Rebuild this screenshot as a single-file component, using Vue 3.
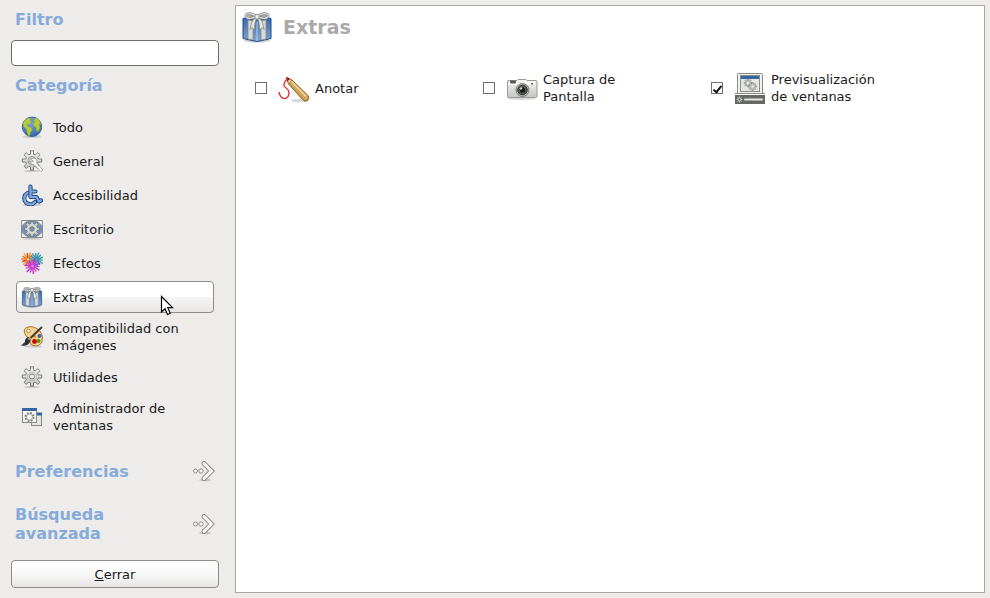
<script setup>
import { ref } from 'vue'

const filter = ref('')
const current = ref('extras')

const categories = [
  { id: 'todo', label: 'Todo', icon: 'globe' },
  { id: 'general', label: 'General', icon: 'general' },
  { id: 'accesibilidad', label: 'Accesibilidad', icon: 'access' },
  { id: 'escritorio', label: 'Escritorio', icon: 'desktop' },
  { id: 'efectos', label: 'Efectos', icon: 'effects' },
  { id: 'extras', label: 'Extras', icon: 'gift' },
  { id: 'imagenes', label: 'Compatibilidad con imágenes', icon: 'palette' },
  { id: 'utilidades', label: 'Utilidades', icon: 'gear' },
  { id: 'ventanas', label: 'Administrador de ventanas', icon: 'windows' }
]

const links = ['Preferencias', 'Búsqueda avanzada']

const plugins = ref([
  { id: 'annotate', label: 'Anotar', icon: 'pencil', enabled: false },
  { id: 'screenshot', label: 'Captura de Pantalla', icon: 'camera', enabled: false },
  { id: 'thumbnail', label: 'Previsualización de ventanas', icon: 'preview', enabled: true }
])

function point(cx, cy, r, a) {
  return `${(cx + r * Math.cos(a)).toFixed(2)} ${(cy + r * Math.sin(a)).toFixed(2)}`
}

function gearPath(cx, cy, inner, outer, teeth) {
  const step = (Math.PI * 2) / teeth
  const pts = []
  for (let i = 0; i < teeth; i++) {
    const a = i * step - Math.PI / 2
    pts.push(point(cx, cy, inner, a - step * 0.3))
    pts.push(point(cx, cy, outer, a - step * 0.2))
    pts.push(point(cx, cy, outer, a + step * 0.2))
    pts.push(point(cx, cy, inner, a + step * 0.3))
  }
  return `M${pts.join('L')}Z`
}

function burst(cx, cy, r, colors) {
  return Array.from({ length: 14 }, (_, i) => ({
    d: `M${cx} ${cy}L${point(cx, cy, i % 2 ? r : r * 0.85, (i * Math.PI) / 7 + 0.1)}`,
    color: colors[i % colors.length]
  }))
}

const rays = [
  ...burst(8, 8.5, 6.8, ['#e8641b', '#f5a623', '#e23b2e', '#f0862a']),
  ...burst(16.5, 8.5, 6.8, ['#2a8fbd', '#35a887', '#3f6fc4', '#2fa3c9']),
  ...burst(12.5, 15, 7.6, ['#d63bd0', '#a13be0', '#f04fb0', '#c929c0'])
]
</script>

<template>
  <div class="window">
    <svg class="sprites" aria-hidden="true">
      <defs>
        <linearGradient id="metal" x1="0" y1="0" x2="0" y2="1">
          <stop offset="0" stop-color="#f6f6f4" />
          <stop offset="1" stop-color="#c3c5c1" />
        </linearGradient>
        <linearGradient id="blue" x1="0" y1="0" x2="0" y2="1">
          <stop offset="0" stop-color="#3465a4" />
          <stop offset="1" stop-color="#7fa6d8" />
        </linearGradient>
        <radialGradient id="sea" cx=".4" cy=".3" r=".8">
          <stop offset="0" stop-color="#7ea7de" />
          <stop offset="1" stop-color="#2d5d9f" />
        </radialGradient>
        <linearGradient id="wood" x1="0" y1="1" x2="1" y2="0">
          <stop offset="0" stop-color="#b07a2c" />
          <stop offset="1" stop-color="#f0cf8c" />
        </linearGradient>
      </defs>

      <symbol id="globe" viewBox="1 1 22 22">
        <ellipse cx="12" cy="21.5" rx="9" ry="1.5" fill="#000" opacity=".15" />
        <circle cx="12" cy="11.8" r="9.7" fill="url(#sea)" stroke="#3a62a0" />
        <path d="M4 6l4-3 3 .5-1 2.500 1.500 1-2.500 2-2 .5 1 2 3 1 1.500 2.500-2 2-.5 3-1.500 1-1.500-4-.5-3-3-2.500-.5-3zM14 4.500l2.500-1.500 3 2.500 1.500 4-1.500-.5.5 4-2 4-1.500-1-.5-3.500-2-1-1-3 2-1.500-1.500-1z" fill="#b5cc3a" stroke="#83a036" stroke-width=".5" />
      </symbol>

      <symbol id="gear" viewBox="1 1 22 22">
        <ellipse cx="12" cy="22" rx="8" ry="1" fill="#000" opacity=".15" />
        <path :d="gearPath(12, 11.5, 6.5, 9.8, 8)" fill="url(#metal)" stroke="#777974" stroke-linejoin="round" />
        <circle cx="12" cy="11.5" r="4.500" fill="none" stroke="#b5b7b3" />
        <circle cx="12" cy="11.5" r="2.500" fill="#eeeeec" stroke="#777974" />
      </symbol>

      <symbol id="general" viewBox="1 1 22 22">
        <ellipse cx="12" cy="22" rx="8" ry="1" fill="#000" opacity=".15" />
        <path :d="gearPath(12, 11.5, 6.5, 9.8, 8)" fill="url(#metal)" stroke="#777974" stroke-linejoin="round" />
        <circle cx="12" cy="11.5" r="4" fill="#d8d9d6" stroke="#8f918c" />
        <path d="M10.500 10q4-2.500 6.500 1l-.5 3 6.500 7-2 1.500-7-7-3-.5-1.500-3 2.500 1 1.500-1z" fill="#fcfcfc" stroke="#888a85" stroke-width=".7" stroke-linejoin="round" />
      </symbol>

      <symbol id="access" viewBox="1 1 22 22">
        <ellipse cx="12" cy="22" rx="9" ry="1" fill="#000" opacity=".15" />
        <g fill="none" stroke-linecap="round" stroke-linejoin="round">
          <path d="M10.500 3.500v10.500h6l2.500 4.500 2-1M11 8.500h4.500M7.500 10a6 6 0 1 0 7.500 9" stroke="#204a87" stroke-width="4.200" />
          <path d="M10.500 3.500v10.500h6l2.500 4.500 2-1M11 8.500h4.500M7.500 10a6 6 0 1 0 7.500 9" stroke="#82aadc" stroke-width="2.200" />
        </g>
      </symbol>

      <symbol id="desktop" viewBox="1 1 22 22">
        <ellipse cx="12" cy="21.5" rx="10" ry="1.500" fill="#000" opacity=".12" />
        <rect x="1.500" y="3.500" width="21" height="17" rx="1" fill="#7094c4" stroke="#888a85" />
        <path d="M1.500 9V3.500H8zM16 3.500h6.500V9zM1.500 15v5.500H8zM22.500 15v5.500H16z" fill="#eeeeec" stroke="#888a85" stroke-width=".8" />
        <path :d="gearPath(12, 12, 5.6, 7.8, 8)" fill="#d3d5d1" stroke="#777974" />
        <circle cx="12" cy="12" r="2.200" fill="#7094c4" stroke="#777974" />
      </symbol>

      <symbol id="effects" viewBox="1 1 22 22">
        <path v-for="(ray, i) in rays" :key="i" :d="ray.d" :stroke="ray.color" stroke-width="1.400" stroke-linecap="round" />
        <circle cx="8" cy="8.5" r="1.300" fill="#f9d34c" />
        <circle cx="16.5" cy="8.5" r="1.300" fill="#5b8bd0" />
        <circle cx="12.5" cy="15" r="1.300" fill="#ef8bea" />
      </symbol>

      <symbol id="gift" viewBox="1 0 30 32">
        <ellipse cx="16" cy="29.500" rx="13" ry="2" fill="#000" opacity=".2" />
        <path d="M2 7.500L16 5l14 2.500V27.500L16 30.500 2 27.500z" fill="url(#blue)" stroke="#204a87" stroke-linejoin="round" />
        <path d="M2.500 8L16 10.500 29.500 8 16 5z" fill="#3a69ac" />
        <path d="M16 10.500v19.500" stroke="#b4cdec" />
        <path d="M7 9l5 1v19l-5-1zM20 10l5-1v19l-5 1z" fill="#d8dad5" stroke="#8a8c86" stroke-width=".8" />
        <path d="M14.500 6.500q-4.500 3-5.500 12l2-2 2.500 2.500q0-8 2-11.500zM17.500 6.500q4.500 3 5.500 12l-2-2-2.500 2.500q0-8-2-11.500z" fill="#e4e5e1" stroke="#868882" stroke-width=".8" stroke-linejoin="round" />
        <path d="M15.500 5.500Q10 1.500 6.500 3t0 4q4 1 9-1.500zM16.500 5.500Q22 1.500 25.500 3t0 4q-4 1-9-1.500z" fill="#aeb3b1" stroke="#7d7f7a" stroke-width="2.600" />
        <path d="M15.500 5.500Q10 1.500 6.500 3t0 4q4 1 9-1.500zM16.500 5.500Q22 1.500 25.500 3t0 4q-4 1-9-1.500z" fill="none" stroke="#e4e5e2" stroke-width="1.300" />
        <rect x="14" y="3.500" width="4" height="4.500" rx="1" fill="#eeeeec" stroke="#7d7f7a" stroke-width=".8" />
      </symbol>

      <symbol id="palette" viewBox="1 1 22 22">
        <ellipse cx="13" cy="21.500" rx="9" ry="1" fill="#000" opacity=".15" />
        <path d="M5.500 10Q2 3.500 8 2t12 4q4 5 2 10.500T13 20.500q-4-1-3-4t-1.500-4-3-2.500z" fill="#f3d292" stroke="#b0762a" />
        <circle cx="8.500" cy="6" r="1.800" fill="#edebe8" stroke="#b0762a" stroke-width=".7" />
        <circle cx="19.500" cy="11" r="2" fill="#3465a4" />
        <circle cx="18.500" cy="16" r="2" fill="#4e9a06" />
        <circle cx="14.500" cy="16.500" r="2.400" fill="#cc0000" />
        <circle cx="14.500" cy="11.500" r="1.300" fill="#f57900" />
        <path d="M21.500 2.500L10.500 13" stroke="#3b3d38" stroke-width="2" stroke-linecap="round" />
        <path d="M10.500 13l-2.500-1q-3.500 2-3 5L1 20.500q6 1 8-2t1.500-5.500z" fill="#2e3436" />
        <path d="M10.500 12.500l-2 2" stroke="#c4a66c" stroke-width="2" />
      </symbol>

      <symbol id="windows" viewBox="1 1 22 22">
        <rect x="11.500" y="8.500" width="10" height="12" fill="#e4e5e3" stroke="#888a85" />
        <path d="M11 7.500h11v3H11z" fill="#3465a4" />
        <rect x="2.500" y="4.500" width="14" height="13" fill="#f6f6f5" stroke="#888a85" />
        <path d="M2 3h15v3H2z" fill="#3465a4" />
        <circle cx="9.500" cy="12" r="4" fill="#eee" stroke="#777974" stroke-width="2" stroke-dasharray="1.700 1.440" />
        <circle cx="9.500" cy="12" r="3" fill="#f6f6f5" stroke="#999b96" stroke-width=".7" />
      </symbol>

      <symbol id="arrows" viewBox="1 1 22 22">
        <ellipse cx="13" cy="21" rx="6" ry="1.200" fill="#000" opacity=".2" />
        <circle cx="3.500" cy="12" r="2" fill="#f4f4f3" stroke="#8d8f8a" />
        <circle cx="9" cy="12" r="2.200" fill="#f4f4f3" stroke="#8d8f8a" />
        <path d="M12 4.500l7.500 7.500-7.500 7.500" fill="none" stroke="#777974" stroke-width="4.800" stroke-linecap="round" />
        <path d="M12 4.500l7.500 7.500-7.500 7.500" fill="none" stroke="#f4f4f3" stroke-width="3.200" stroke-linecap="round" />
      </symbol>

      <symbol id="pencil" viewBox="0 0 32 32">
        <ellipse cx="22" cy="28.500" rx="9" ry="1.800" fill="#000" opacity=".15" />
        <path d="M9 6l5 2 16 15.500q2 3-.5 5t-5-1L10.500 12z" fill="url(#wood)" stroke="#8a6326" stroke-linejoin="round" />
        <path d="M13.500 9.500l14.500 15" stroke="#f6dda4" stroke-width="1.300" />
        <path d="M9 6l5 2-3.500 4z" fill="#f3d9ab" stroke="#8a6326" stroke-width=".7" />
        <path d="M8 5l4 1.500-2.500 3z" fill="#a40000" />
        <path d="M9 7Q4 13 7 15t4 5q0 6-4 6.500T1 20.500" fill="none" stroke="#e2343c" stroke-width="1.400" stroke-linecap="round" />
      </symbol>

      <symbol id="camera" viewBox="0 -2 32 32">
        <ellipse cx="16" cy="24.500" rx="14" ry="1.500" fill="#000" opacity=".15" />
        <path d="M2 6.500h9l1-1h8l1 1h9q1 0 1 1V22q0 1.500-1.500 1.500h-27Q1.500 23.500 1.500 22V7.500q0-1 .5-1z" fill="url(#metal)" stroke="#999b97" />
        <path d="M3 8h26v3H3z" fill="#fff" />
        <rect x="4" y="6.500" width="6" height="3" rx="1" fill="#555753" />
        <rect x="25" y="9" width="2" height="1.500" fill="#555753" />
        <circle cx="16.500" cy="16" r="6.500" fill="#babdb6" stroke="#777974" />
        <circle cx="16.500" cy="16" r="4.800" fill="#555753" stroke="#2e3436" />
        <circle cx="16.500" cy="16" r="2.600" fill="#161818" />
        <circle cx="15" cy="14.500" r="1.200" fill="#c9d2dc" />
      </symbol>

      <symbol id="preview" viewBox="0 0 32 32">
        <path d="M4.500 1.500h23q1 0 1 1v19h-25v-19q0-1 1-1z" fill="#f1f1f0" stroke="#888a85" />
        <rect x="6.500" y="3.500" width="19" height="16" fill="#e6e7e5" stroke="#888a85" />
        <path d="M7 4h18v3H7z" fill="#3465a4" />
        <path :d="gearPath(14, 11, 2.6, 4, 8)" fill="#c6c8c4" stroke="#888a85" stroke-width=".7" />
        <path :d="gearPath(18.5, 14.5, 2.6, 4, 8)" fill="#c6c8c4" stroke="#888a85" stroke-width=".7" />
        <circle cx="14" cy="11" r="1" fill="#f1f1f0" />
        <circle cx="18.5" cy="14.5" r="1" fill="#f1f1f0" />
        <path d="M1 21.500h30" stroke="#888a85" />
        <rect x="1" y="23" width="30" height="9" fill="#666864" />
        <path :d="gearPath(5.5, 27.5, 1.8, 3, 8)" fill="#c6c8c4" />
        <circle cx="5.500" cy="27.5" r="1" fill="#5d5f5b" />
        <path d="M11 27.500h17" stroke="#e4e5e3" stroke-width="2" stroke-linecap="round" />
      </symbol>
    </svg>

    <aside class="sidebar">
      <label class="heading" for="filter">Filtro</label>
      <input id="filter" v-model="filter" class="filter" type="text" />

      <h2 class="heading">Categoría</h2>
      <nav class="categories">
        <button
          v-for="cat in categories"
          :key="cat.id"
          type="button"
          class="category"
          :class="{ active: cat.id === current }"
          @click="current = cat.id"
        >
          <svg class="icon-small"><use :href="`#${cat.icon}`" /></svg>
          <span>{{ cat.label }}</span>
          <svg v-if="cat.id === 'extras'" class="pointer" viewBox="0 0 14 21" aria-hidden="true">
            <path d="M1.500 1.500v15.500l3.500-3.200 2.500 5.700 2.700-1.200L7.700 12.700h4.800z" fill="#fff" stroke="#000" stroke-width="1.200" />
          </svg>
        </button>
      </nav>

      <div class="links">
        <button v-for="link in links" :key="link" type="button" class="link">
          <span class="link-text">{{ link }}</span>
          <svg class="icon-small"><use href="#arrows" /></svg>
        </button>
      </div>

      <button type="button" class="close"><u>C</u>errar</button>
    </aside>

    <main class="panel">
      <header class="panel-header">
        <svg class="icon-large"><use href="#gift" /></svg>
        <h1 class="title">Extras</h1>
      </header>
      <div class="plugins">
        <div v-for="plugin in plugins" :key="plugin.id" class="plugin">
          <input :id="plugin.id" v-model="plugin.enabled" type="checkbox" class="check" />
          <label class="plugin-label" :for="plugin.id">
            <svg class="icon-large"><use :href="`#${plugin.icon}`" /></svg>
            <span class="plugin-name">{{ plugin.label }}</span>
          </label>
        </div>
      </div>
    </main>
  </div>
</template>

<style>
body {
  margin: 0;
  background: #edeceb;
}
</style>

<style scoped>
.window {
  display: flex;
  box-sizing: border-box;
  min-height: 100vh;
  padding: 5px 5px 5px 11px;
  font-family: 'DejaVu Sans', sans-serif;
  font-size: 13px;
  line-height: 17px;
  color: #1a1a1a;
}

.sprites {
  position: absolute;
  width: 0;
  height: 0;
}

button,
input {
  box-sizing: border-box;
  margin: 0;
  font: inherit;
  color: inherit;
}

.sidebar {
  display: flex;
  flex: 0 0 208px;
  flex-direction: column;
  margin-right: 16px;
}

.heading {
  margin: 0;
  padding: 5px 4px;
  font-size: 16px;
  font-weight: bold;
  line-height: 19px;
  color: #86abd9;
}

.filter {
  height: 26px;
  margin: 6px 0 5px;
  padding: 2px 6px;
  border: 1px solid #6f6e6c;
  border-radius: 4px;
  background: #fff;
}

.categories {
  display: flex;
  flex-direction: column;
  gap: 2px;
  padding: 11px 5px 0;
}

.category {
  position: relative;
  display: flex;
  align-items: center;
  gap: 10px;
  padding: 4px;
  border: 1px solid transparent;
  border-radius: 4px;
  background: none;
  text-align: left;
}

.category.active {
  border-color: #8e8c89;
  background: linear-gradient(#fff 50%, #f6f5f5 50%, #e8e7e6);
}

.icon-small {
  flex: none;
  width: 22px;
  height: 22px;
}

.icon-large {
  flex: none;
  width: 32px;
  height: 32px;
}

.pointer {
  position: absolute;
  top: 13px;
  left: 143px;
  width: 14px;
  height: 21px;
}

.links {
  display: flex;
  flex-direction: column;
  gap: 23px;
  margin-top: 21px;
}

.link {
  display: flex;
  align-items: center;
  justify-content: space-between;
  padding: 0 4px;
  border: 0;
  background: none;
  font-size: 16px;
  font-weight: bold;
  line-height: 19px;
  color: #86abd9;
  text-align: left;
}

.link-text {
  max-width: 120px;
}

.close {
  height: 28px;
  margin-top: auto;
  margin-bottom: 5px;
  border: 1px solid #8e8c89;
  border-radius: 4px;
  background: linear-gradient(#fff, #f8f8f8 50%, #e6e5e4);
}

.panel {
  flex: 1;
  min-width: 0;
  border: 1px solid #a9a8a6;
  background: #fff;
}

.panel-header {
  display: flex;
  align-items: center;
  gap: 10px;
  padding: 5px;
}

.title {
  margin: 0;
  font-size: 19px;
  line-height: 24px;
  color: #aaa;
}

.plugins {
  display: grid;
  grid-template-columns: repeat(auto-fill, 228px);
  row-gap: 16px;
  padding: 23px 19px;
}

.plugin {
  display: flex;
  align-items: center;
  gap: 11px;
}

.check {
  appearance: none;
  display: grid;
  place-items: center;
  width: 12px;
  height: 12px;
  border: 1px solid #6f6e6c;
  background: #fff;
}

.check:checked::before {
  content: '';
  width: 3px;
  height: 7px;
  border: solid #111;
  border-width: 0 2px 2px 0;
  transform: rotate(38deg);
}

.plugin-label {
  display: flex;
  align-items: center;
  gap: 5px;
}

.plugin-name {
  max-width: 110px;
}
</style>
